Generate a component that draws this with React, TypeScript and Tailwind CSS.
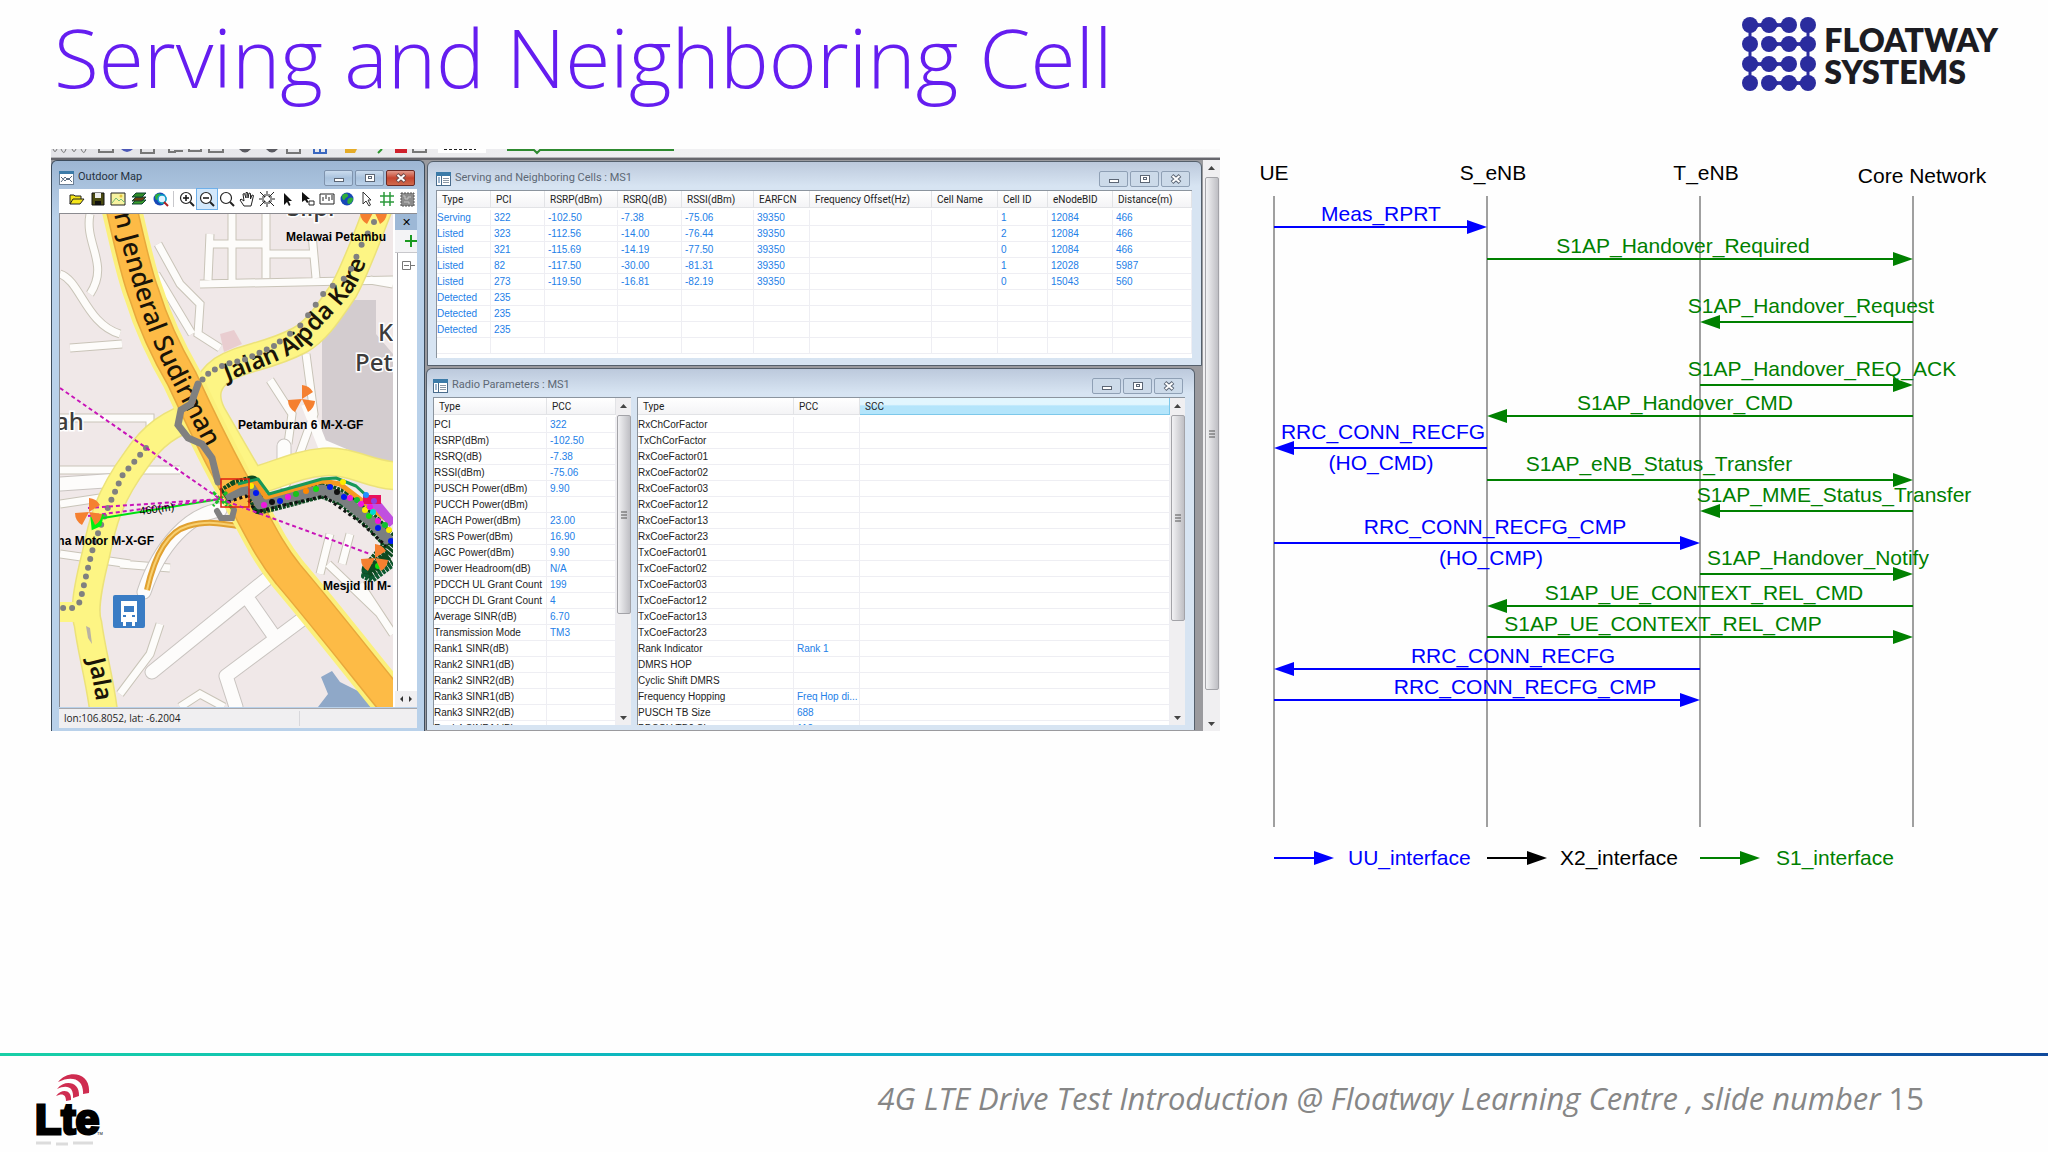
import type { ReactNode } from 'react'

const BLUE = '#0000ff'
const GREEN = '#008000'

const cellColumns = [
  { label: 'Type', width: 'w-[54px]' },
  { label: 'PCI', width: 'w-[54px]' },
  { label: 'RSRP(dBm)', width: 'w-[73px]' },
  { label: 'RSRQ(dB)', width: 'w-[64px]' },
  { label: 'RSSI(dBm)', width: 'w-[72px]' },
  { label: 'EARFCN', width: 'w-[56px]' },
  { label: 'Frequency Offset(Hz)', width: 'w-[122px]' },
  { label: 'Cell Name', width: 'w-[66px]' },
  { label: 'Cell ID', width: 'w-[50px]' },
  { label: 'eNodeBID', width: 'w-[65px]' },
  { label: 'Distance(m)', width: '' },
]

const cellRows = [
  ['Serving', '322', '-102.50', '-7.38', '-75.06', '39350', '', '', '1', '12084', '466'],
  ['Listed', '323', '-112.56', '-14.00', '-76.44', '39350', '', '', '2', '12084', '466'],
  ['Listed', '321', '-115.69', '-14.19', '-77.50', '39350', '', '', '0', '12084', '466'],
  ['Listed', '82', '-117.50', '-30.00', '-81.31', '39350', '', '', '1', '12028', '5987'],
  ['Listed', '273', '-119.50', '-16.81', '-82.19', '39350', '', '', '0', '15043', '560'],
  ['Detected', '235', '', '', '', '', '', '', '', '', ''],
  ['Detected', '235', '', '', '', '', '', '', '', '', ''],
  ['Detected', '235', '', '', '', '', '', '', '', '', ''],
  ['', '', '', '', '', '', '', '', '', '', ''],
]

const radioRows = [
  ['PCI', '322'],
  ['RSRP(dBm)', '-102.50'],
  ['RSRQ(dB)', '-7.38'],
  ['RSSI(dBm)', '-75.06'],
  ['PUSCH Power(dBm)', '9.90'],
  ['PUCCH Power(dBm)', ''],
  ['RACH Power(dBm)', '23.00'],
  ['SRS Power(dBm)', '16.90'],
  ['AGC Power(dBm)', '9.90'],
  ['Power Headroom(dB)', 'N/A'],
  ['PDCCH UL Grant Count', '199'],
  ['PDCCH DL Grant Count', '4'],
  ['Average SINR(dB)', '6.70'],
  ['Transmission Mode', 'TM3'],
  ['Rank1 SINR(dB)', ''],
  ['Rank2 SINR1(dB)', ''],
  ['Rank2 SINR2(dB)', ''],
  ['Rank3 SINR1(dB)', ''],
  ['Rank3 SINR2(dB)', ''],
  ['Rank4 SINR1(dB)', ''],
]

const factorRows = [
  ['RxChCorFactor', '', ''],
  ['TxChCorFactor', '', ''],
  ['RxCoeFactor01', '', ''],
  ['RxCoeFactor02', '', ''],
  ['RxCoeFactor03', '', ''],
  ['RxCoeFactor12', '', ''],
  ['RxCoeFactor13', '', ''],
  ['RxCoeFactor23', '', ''],
  ['TxCoeFactor01', '', ''],
  ['TxCoeFactor02', '', ''],
  ['TxCoeFactor03', '', ''],
  ['TxCoeFactor12', '', ''],
  ['TxCoeFactor13', '', ''],
  ['TxCoeFactor23', '', ''],
  ['Rank Indicator', 'Rank 1', ''],
  ['DMRS HOP', '', ''],
  ['Cyclic Shift DMRS', '', ''],
  ['Frequency Hopping', 'Freq Hop di...', ''],
  ['PUSCH TB Size', '688', ''],
  ['PDSCH TB0 Size', '112', ''],
]

// lifelines: UE 1, S_eNB 214, T_eNB 427, core network 640
const messages = [
  { from: 1, to: 214, y: 79, color: BLUE, text: 'Meas_RPRT', x: 108 },
  { from: 214, to: 640, y: 111, color: GREEN, text: 'S1AP_Handover_Required', x: 410 },
  { from: 640, to: 427, y: 174, color: GREEN, text: 'S1AP_Handover_Request', x: 538, lift: 9 },
  { from: 427, to: 640, y: 237, color: GREEN, text: 'S1AP_Handover_REQ_ACK', x: 549, lift: 9 },
  { from: 640, to: 214, y: 268, color: GREEN, text: 'S1AP_Handover_CMD', x: 412 },
  { from: 214, to: 1, y: 300, color: BLUE, text: 'RRC_CONN_RECFG', x: 110, lift: 9 },
  { from: 214, to: 640, y: 332, color: GREEN, text: 'S1AP_eNB_Status_Transfer', x: 386, lift: 9 },
  { from: 640, to: 427, y: 363, color: GREEN, text: 'S1AP_MME_Status_Transfer', x: 561, lift: 9 },
  { from: 1, to: 427, y: 395, color: BLUE, text: 'RRC_CONN_RECFG_CMP', x: 222, lift: 9 },
  { from: 427, to: 640, y: 426, color: GREEN, text: 'S1AP_Handover_Notify', x: 545, lift: 9 },
  { from: 640, to: 214, y: 458, color: GREEN, text: 'S1AP_UE_CONTEXT_REL_CMD', x: 431 },
  { from: 214, to: 640, y: 489, color: GREEN, text: 'S1AP_UE_CONTEXT_REL_CMP', x: 390 },
  { from: 427, to: 1, y: 521, color: BLUE, text: 'RRC_CONN_RECFG', x: 240 },
  { from: 1, to: 427, y: 552, color: BLUE, text: 'RRC_CONN_RECFG_CMP', x: 252 },
]

function Arrow({ from, to, y, color }: { from: number; to: number; y: number; color: string }) {
  const d = to > from ? -1 : 1
  return (
    <g stroke="none" fill={color}>
      <line x1={from} x2={to + d * 18} y1={y} y2={y} stroke={color} strokeWidth="2" />
      <polygon points={`${to},${y} ${to + d * 20},${y - 7} ${to + d * 20},${y + 7}`} />
    </g>
  )
}

function SequenceDiagram() {
  return (
    <svg viewBox="-1 1 776 740" className="w-full overflow-visible" fontFamily="'Liberation Sans', Arial, sans-serif" fontSize="21">
      <g stroke="#a0a0a0" strokeWidth="2">
        {[1, 214, 427, 640].map((x) => (
          <line key={x} x1={x} x2={x} y1="48" y2="679" />
        ))}
      </g>
      <g textAnchor="middle">
        <text x="1" y="32">UE</text>
        <text x="220" y="32">S_eNB</text>
        <text x="433" y="32">T_eNB</text>
        <text x="649" y="35">Core Network</text>
        {messages.map((m) => (
          <g key={m.y}>
            <Arrow from={m.from} to={m.to} y={m.y} color={m.color} />
            <text x={m.x} y={m.y - (m.lift ?? 6)} fill={m.color}>{m.text}</text>
          </g>
        ))}
        <text x="108" y="322" fill={BLUE}>(HO_CMD)</text>
        <text x="218" y="417" fill={BLUE}>(HO_CMP)</text>
      </g>
      <Arrow from={1} to={61} y={710} color={BLUE} />
      <text x="75" y="717" fill={BLUE}>UU_interface</text>
      <Arrow from={214} to={274} y={710} color="#000000" />
      <text x="287" y="717">X2_interface</text>
      <Arrow from={427} to={487} y={710} color={GREEN} />
      <text x="503" y="717" fill={GREEN}>S1_interface</text>
    </svg>
  )
}

function FloatwayLogo() {
  const at = [8, 27, 47, 66]
  return (
    <div className="flex items-center gap-2">
      <svg viewBox="0 0 74 74" className="h-[74px] w-[74px]" fill="#2b2c9e">
        {at.map((x) => at.map((y) => <circle key={`${x}-${y}`} cx={x} cy={y} r="8" />))}
        <path
          stroke="#2b2c9e"
          strokeWidth="3"
          fill="none"
          d="M8 8H47M8 8V66M66 8V66M27 27H66M8 47H47M27 66H66"
        />
        <path d="M13 3q4.500 7 9 0v10q-4.500-7-9 0zM32 3q5 7 10 0v10q-5-7-10 0zM32 22q5 7 10 0v10q-5-7-10 0zM52 22q4.500 7 9 0v10q-4.500-7-9 0zM13 42q4.500 7 9 0v10q-4.500-7-9 0zM32 42q5 7 10 0v10q-5-7-10 0zM32 61q5 7 10 0v10q-5-7-10 0zM52 61q4.500 7 9 0v10q-4.500-7-9 0z" />
      </svg>
      <div className="pt-1 font-['Lato',sans-serif] text-[32px] leading-8 font-extrabold text-[#1c1c22]">
        FLOATWAY
        <br />
        SYSTEMS
      </div>
    </div>
  )
}

function LteLogo() {
  return (
    <svg viewBox="0 0 72 76" className="h-[76px] w-[72px]">
      <g fill="#cf2c50">
        <path d="M22 9C32-4 55-1 53 20L47 21C48 6 36 2 22 9z" />
        <path d="M21 16C29 6 44 9 43 23L37 25C38 14 31 11 21 16z" />
        <path d="M20 23C26 15 36 17 35 27L30 28C30 21 26 20 20 23z" />
      </g>
      <text
        x="-1"
        y="61"
        fontFamily="'Liberation Sans', Arial, sans-serif"
        fontWeight="700"
        fontSize="43"
        stroke="#000"
        strokeWidth="3"
      >
        Lte
      </text>
      <text x="61" y="62" fontSize="4" fontFamily="'Liberation Sans', Arial, sans-serif">TM</text>
      <path d="M0 70h15M20 71h12M37 70h20" stroke="#dcdcdc" strokeWidth="3" />
    </svg>
  )
}

function WindowButton({ kind, active }: { kind: 'min' | 'max' | 'close'; active?: boolean }) {
  const look = active
    ? kind === 'close'
      ? 'border-[#6b2a25] bg-linear-to-b from-[#e19b8d] via-[#c5442f] to-[#cf6a4d]'
      : 'border-[#7f93ad] bg-linear-to-b from-[#cbdcee] via-[#a9c2dd] to-[#bcd2ea]'
    : 'border-[#8fa0b5] bg-[#ccdae9]'
  const stroke = active && kind === 'close' ? '#6e4a48' : '#5c6675'
  return (
    <button type="button" aria-label={kind} className={`flex h-4 w-[29px] items-center justify-center rounded-xs border ${look}`}>
      <svg viewBox="0 0 12 10" className="h-[10px] w-3" fill="none" stroke={stroke}>
        {kind === 'min' && <rect x="1.500" y="5.500" width="9" height="3" fill="#fff" />}
        {kind === 'max' && (
          <>
            <rect x="1.500" y="1.500" width="9" height="7" fill="#fff" />
            <rect x="4.500" y="3.500" width="3" height="2" />
          </>
        )}
        {kind === 'close' && (
          <>
            <path d="M2 1.500L10 8.500M10 1.500L2 8.500" strokeWidth="4" />
            <path d="M2.500 2L9.500 8M9.500 2L2.500 8" stroke="#fff" strokeWidth="2" />
          </>
        )}
      </svg>
    </button>
  )
}

function TitleBar({ title, icon, active }: { title: string; icon: ReactNode; active?: boolean }) {
  return (
    <div className="flex h-7 shrink-0 items-center gap-[2px] pt-[5px] pr-[2px]">
      <div className={`flex flex-1 items-center gap-1 font-['Roboto',sans-serif] text-[11px] ${active ? 'text-[#26323f]' : 'text-[#5d6875]'}`}>
        {icon}
        {title}
      </div>
      <WindowButton kind="min" active={active} />
      <WindowButton kind="max" active={active} />
      <WindowButton kind="close" active={active} />
    </div>
  )
}

function ListIcon() {
  return (
    <svg viewBox="0 0 15 14" className="h-[14px] w-[15px]">
      <rect x=".5" y=".5" width="14" height="13" fill="#fff" stroke="#4a6c8c" />
      <rect width="15" height="4" fill="#3c7ba8" />
      <path d="M2 6h2M2 8h2M2 10h2" stroke="#3c6fa0" />
      <path d="M5.500 4v9" stroke="#4a6c8c" />
      <path d="M7 6.500h6M7 8.500h6M7 10.500h6" stroke="#8a97a5" />
    </svg>
  )
}

function ChartIcon() {
  return (
    <svg viewBox="0 0 15 14" className="h-[14px] w-[15px]">
      <rect x=".5" y=".5" width="14" height="13" fill="#fff" stroke="#6b7f95" />
      <rect width="15" height="3" fill="#3c7ba8" />
      <path d="M2 6l4 4 3-3 4 4M2 11l4-5 3 3 4-4" fill="none" stroke="#5a6c80" />
    </svg>
  )
}

function ScrollBar({ thumb, width = 'w-[15px]' }: { thumb: string; width?: string }) {
  return (
    <div className={`flex shrink-0 flex-col items-center bg-[#f0eff1] ${width}`}>
      <svg viewBox="0 0 15 17" className="h-[17px] w-[15px] shrink-0">
        <path d="M4 10l3.500-4 3.500 4z" fill="#444" />
      </svg>
      <div className={`flex w-[14px] items-center justify-center rounded-xs border border-[#a3a3a8] bg-linear-to-r from-[#f2f2f4] to-[#bfbfc4] ${thumb}`}>
        <svg viewBox="0 0 6 8" className="h-2 w-[6px]">
          <path d="M0 1h6M0 4h6M0 7h6" stroke="#555" />
        </svg>
      </div>
      <svg viewBox="0 0 15 17" className="mt-auto h-[17px] w-[15px] shrink-0">
        <path d="M4 8l3.500 4 3.500-4z" fill="#444" />
      </svg>
    </div>
  )
}

type Column = { label: string; width: string; selected?: boolean }

function DataTable({ columns, rows, blueFrom = 0 }: { columns: Column[]; rows: string[][]; blueFrom?: number }) {
  return (
    <table className="w-full table-fixed border-separate border-spacing-0 bg-white text-left text-[10px] leading-[15px] whitespace-nowrap">
      <thead className="font-['Roboto',sans-serif] text-[#222]">
        <tr>
          {columns.map((c) => (
            <th
              key={c.label}
              scope="col"
              className={`h-[17px] border-r border-b p-0 pl-[5px] font-normal ${c.width} ${
                c.selected
                  ? 'border-[#7cc8ea] bg-linear-to-b from-[#e2f6fe] from-40% to-[#b4e5fb] to-50%'
                  : 'border-[#e2e3e6] bg-linear-to-b from-white to-[#f4f4f6]'
              }`}
            >
              {c.label}
            </th>
          ))}
        </tr>
      </thead>
      <tbody>
        <tr aria-hidden="true" className="h-[2px]">
          <td colSpan={columns.length} className="p-0" />
        </tr>
        {rows.map((row, i) => (
          <tr key={i} className="h-4">
            {row.map((value, j) => (
              <td
                key={j}
                className={`h-4 border-r border-b border-[#eeeef3] p-0 ${j > 0 ? 'pl-[3px]' : ''} ${
                  j >= blueFrom ? 'text-[#2380e8]' : 'text-[#222]'
                }`}
              >
                {value}
              </td>
            ))}
          </tr>
        ))}
      </tbody>
    </table>
  )
}

const globe = (
  <>
    <circle cx="9" cy="9" r="6.500" fill="#1848b8" />
    <path d="M4 6c2-3 5-3 6-1s-2 2-3 4-3 1-3-3zM10 9c2-2 5-2 5 0s-2 5-4 5-2-3-1-5z" fill="#2fae3a" />
  </>
)
const lens = (
  <>
    <circle cx="8" cy="8" r="5.500" fill="#fff" stroke="#222" strokeWidth="1.200" />
    <path d="M12 12l4 4" stroke="#222" strokeWidth="2" />
  </>
)

const fileTools: [string, ReactNode][] = [
  ['Open', <path d="M2 14V5h4l1 1h6v3M2 14l3-5h11l-4 5z" fill="#f5e51b" stroke="#222" />],
  ['Save', <><path d="M3 3h12v12H3z" fill="#4a4a10" stroke="#111" /><path d="M6 3h6v5H6z" fill="#eee" /><path d="M6 11h6v4H6z" fill="#111" /></>],
  ['Image', <><path d="M2 3h14v12H2z" fill="#f7f3a0" stroke="#222" /><path d="M3 13l4-5 3 3 2-2 4 4" fill="none" stroke="#7b7" /><circle cx="12" cy="6" r="1.500" fill="#e5c33a" /></>],
  ['Layers', <><path d="M2 14l4-4h10l-4 4z" fill="#3a9d2c" stroke="#143" /><path d="M2 11l4-4h10l-4 4z" fill="#6b3e12" stroke="#143" /><path d="M2 7l4-4h10l-4 4z" fill="#2e8c28" stroke="#143" /></>],
  ['Find', <>{globe}<circle cx="11" cy="9" r="4" fill="#dff3ff" stroke="#08a0c8" strokeWidth="1.500" /><path d="M13 12l4 4" stroke="#b02020" strokeWidth="2" /></>],
]

const mapTools: [string, ReactNode][] = [
  ['Zoom in', <>{lens}<path d="M5 8h6M8 5v6" stroke="#111" strokeWidth="1.500" /></>],
  ['Zoom out', <>{lens}<path d="M5 8h6" stroke="#111" strokeWidth="1.500" /></>],
  ['Zoom area', lens],
  ['Pan', <path d="M6 16L2 10l1-1 3 2-1-7 1.500-.5L8 8V2.500h1.500L10 8l1-5 1.500.5L12.500 9 14 5l1.500.5L14 12l-1 4z" fill="#fff" stroke="#222" />],
  ['Fit', <path d="M2 2l5 5M16 2l-5 5M2 16l5-5M16 16l-5-5M4 7h3V4M14 7h-3V4M4 11h3v3M14 11h-3v3M1 9h5M12 9h5M9 1v5M9 12v5" fill="none" stroke="#222" />],
  ['Select', <path d="M6 3v12l3-3 2 4 1.500-1-2-4H14z" fill="#111" />],
  ['Select area', <><path d="M4 2v10l3-2 2 3 1.500-1L9 9h3z" fill="#111" /><path d="M11 11h5v4h-5z" fill="#fff" stroke="#222" /></>],
  ['Ruler', <><path d="M2 4h14v10H2z" fill="#fff" stroke="#222" /><path d="M5 7v4M8 5v4M11 7v4M14 5v5" stroke="#222" /></>],
  ['Earth', globe],
  ['Pointer', <path d="M5 2v12l3-3 3 5 1.500-1-2.500-5H13z" fill="#fff" stroke="#333" />],
  ['Grid', <path d="M2 6h14M2 12h14M6 2v14M12 2v14" stroke="#2c9a3c" strokeWidth="1.500" />],
  ['Texture', <><path d="M3 3h13v13H3z" fill="#8b8b8b" stroke="#555" strokeDasharray="2 1" /><path d="M5 6h2v3h3v-2h3M6 12h5v2" stroke="#c4c4c4" fill="none" /></>],
]

function Tool({ name, on, children }: { name: string; on?: boolean; children: ReactNode }) {
  return (
    <button
      type="button"
      aria-label={name}
      className={`flex h-5 items-center justify-center ${on ? 'bg-[#d3e8fb] outline outline-[#6fb0ea]' : ''}`}
    >
      <svg viewBox="0 0 18 18" className="h-[18px] w-[18px]" fill="none">
        {children}
      </svg>
    </button>
  )
}

function Sector({ x, y }: { x: number; y: number }) {
  return (
    <path
      d={`M${x} ${y}l0-14a14 14 0 0 1 11 7zM${x} ${y}l13 2a14 14 0 0 1-7 11zM${x} ${y}l-7 13a14 14 0 0 1-7-12z`}
      fill="#f58030"
    />
  )
}

const routeDots: [number, number, string][] = [
  [191, 272, '#ffee00'], [196, 279, '#0018f0'], [204, 291, '#f016e0'], [212, 288, '#111'], [220, 287, '#0018f0'],
  [228, 283, '#f016e0'], [236, 280, '#19c319'], [246, 277, '#ff8800'], [256, 275, '#10e010'], [270, 273, '#0018f0'],
  [277, 278, '#111'], [283, 268, '#ffee00'], [284, 283, '#0018f0'], [290, 284, '#f016e0'], [297, 286, '#10c030'],
  [301, 290, '#f016e0'], [305, 296, '#ffee00'], [310, 293, '#f016e0'], [309, 302, '#10e010'], [313, 298, '#00d8d8'],
  [318, 307, '#f016e0'], [318, 314, '#0018f0'], [325, 311, '#10c030'], [329, 316, '#ffee00'], [331, 327, '#0018f0'],
  [306, 281, '#2090ff'], [314, 287, '#9040e0'], [324, 349, '#ffee00'], [318, 352, '#10e010'],
]

function StreetMap() {
  const road = 'M60-12C70 30 76 60 84 80C92 106 104 134 122 165C140 204 158 240 172 266C196 306 204 330 228 360C262 400 290 436 340 498'
  const aipda = 'M320-10C308 20 298 50 284 76C270 96 258 116 240 126C206 144 184 142 162 156C148 166 142 180 152 200L188 262'
  const west = 'M140 200C110 208 92 222 76 246C48 284 42 310 36 340C26 380 24 398 28 410C32 440 40 466 44 500'
  const east = 'M184 270C216 262 236 250 264 248C292 246 312 262 340 262'
  const small =
    'M30 0C24 30 50 50 30 80M0 60C20 66 26 110 60 120M62 130L10 134M98 30L120 70L140 90L138 120L160 134M96 60L132 120M140 70L333 66M150 20L148 66M172 0V66M206 0V64M252 20L256 64M148 30H205M206 40H252M0 204H90V246M0 256H120M210 166L232 200L228 230M246 140L254 200L236 250M0 290L40 284M0 340L70 350M60 350L110 354M310 66L333 70M270 320L260 360M290 320L282 350M268 350L320 400M300 370L333 420M60 480L90 440L100 410M120 493L140 480L164 493'
  const wide =
    'M92 458L208 364M186 382L214 422M166 462L252 398M166 462L176 493M84 378C100 330 130 300 160 296M224 232V268M0 270L60 266'
  return (
    <svg viewBox="0 0 333 493" className="h-[493px] min-w-0 flex-1 bg-[#f0e8e8]" preserveAspectRatio="xMinYMin slice">
      <defs>
        <path id="road-main" d="M54 0C62 34 70 60 76 80C86 112 98 142 114 172C132 208 146 234 176 290" />
        <path id="road-aipda" d="M167 167C200 154 226 146 246 130C264 106 278 98 296 72C306 50 316 24 326-10" />
        <path id="road-south" d="M28 446C32 462 36 478 40 520" />
      </defs>
      <path d="M266 86H316V120L333 140V250L300 246L262 230V110z" fill="#d3cccf" />
      <path d="M160 120l14-4 8 14-18 8z" fill="#e9cdd0" />
      <path d={small} fill="none" stroke="#c9c4b8" strokeWidth="9" />
      <path d={small} fill="none" stroke="#fdfcfa" strokeWidth="7" />
      <path d={wide} fill="none" stroke="#c9c4c0" strokeWidth="15" strokeLinecap="round" />
      <path d={wide} fill="none" stroke="#fdfcfb" strokeWidth="13" strokeLinecap="round" />
      <path d="M246 190L262 230L300 246L333 260" fill="none" stroke="#fdfcfa" strokeWidth="10" />
      <path d="M258 493L268 480L261 463L272 457L280 468L300 478L326 493z" fill="#8fa8c8" />
      <path d="M87 376C94 344 106 318 128 312S160 310 178 312" fill="none" stroke="#e0a030" strokeWidth="6" />
      <path d="M87 376C94 344 106 318 128 312S160 310 178 312" fill="none" stroke="#f8d070" strokeWidth="2" />
      <g fill="none" stroke="#ece27a" strokeWidth="29">
        <path d={aipda} />
        <path d={west} />
        <path d={east} />
      </g>
      <path d="M0 398H30" stroke="#fdf584" strokeWidth="20" />
      <g fill="none" stroke="#fdf584" strokeWidth="26">
        <path d={aipda} />
        <path d={west} />
        <path d={east} />
      </g>
      <path d={road} fill="none" stroke="#fbf07c" strokeWidth="40" />
      <path d={road} fill="none" stroke="#e8a83c" strokeWidth="32" />
      <path d={road} fill="none" stroke="#fdbb46" strokeWidth="29" />

      <g fontFamily="'Noto Sans', sans-serif" fontSize="24" fontWeight="500" fill="#1a1408">
        <text fontSize="26">
          <textPath href="#road-main">n Jenderal Sudirman</textPath>
        </text>
        <text fontWeight="600">
          <textPath href="#road-aipda">Jalan Aipda Kare</textPath>
        </text>
        <text fontWeight="600">
          <textPath href="#road-south">Jala</textPath>
        </text>
        <g fill="#3c3c3c" stroke="#fff" strokeWidth="3" paintOrder="stroke">
          <text x="-5" y="216">ah</text>
          <text x="318" y="127">K</text>
          <text x="295" y="157">Pet</text>
          <text x="227" y="2">Slipi</text>
        </g>
      </g>

      <g fill="none" stroke="#808080" strokeLinecap="round">
        <path d="M314 8L302 30L288 62L266 76L252 96L240 112L214 132" strokeWidth="6" strokeDasharray="0 13" />
        <path d="M214 132L184 146L166 150L150 158L140 168" strokeWidth="6" strokeDasharray="0 8" />
        <path d="M138 170L131 190L121 196L118 211L128 224L142 230L152 244L158 268" strokeWidth="7" />
        <path d="M157 297L161 304H172L174 296" strokeWidth="6" />
        <path d="M86 234L62 262L46 298L34 330L27 358L20 388L12 394L-2 394" strokeWidth="6" strokeDasharray="0 9" />
      </g>

      <g fill="none" strokeLinejoin="round">
        <path d="M164 282L176 274L192 270L200 292L216 288L262 276L284 284L314 310L332 330L310 356L330 344" stroke="#0c4a20" strokeWidth="17" strokeDasharray="3 1" />
        <path d="M166 284L178 277L192 274L200 290L216 286L262 276L282 284L312 308L330 328" stroke="#7b7f80" strokeWidth="11" />
        <path d="M166 278L180 271L196 268L206 283L262 267L280 270L330 308" stroke="#f59a20" strokeWidth="5" />
        <path d="M178 270L198 265L209 280L262 265L276 264L296 272L333 306" stroke="#189858" strokeWidth="3" />
        <path d="M168 288L186 282L196 298L220 292L264 282L300 308L326 332" stroke="#111" strokeWidth="3" strokeDasharray="3 3" />
        <path d="M304 284L318 292L333 310" stroke="#c050e0" strokeWidth="9" />
        <path d="M306 352L304 362L312 366L333 350" stroke="#0c5a30" strokeWidth="6" strokeDasharray="3 1" />
      </g>
      <rect x="303" y="281" width="18" height="9" fill="#e8105c" />
      {routeDots.map(([x, y, color]) => (
        <circle key={`${x}-${y}`} cx={x} cy={y} r="3" fill={color} />
      ))}
      <path d="M153 278l14 14M167 278l-14 14M172 294l-8-8" stroke="#18c028" strokeWidth="3" strokeDasharray="4 2" />
      <rect x="161" y="265" width="28" height="28" fill="none" stroke="#e02010" strokeWidth="1.500" />

      <path d="M43 304L160 285" stroke="#00e010" strokeWidth="2" />
      <path d="M0 174L160 285M28 294L160 285M28 302L160 285L310 340" fill="none" stroke="#c814b8" strokeWidth="2" strokeDasharray="4 3" />
      <path d="M32 304L42 302L40 311L33 314z" fill="#00f010" stroke="#00f010" strokeWidth="3" />
      <text x="80" y="301" fontSize="11" fontFamily="'Liberation Sans', Arial, sans-serif" transform="rotate(-8 80 301)">460(m)</text>

      <Sector x={242} y={185} />
      <Sector x={29} y={298} />
      <Sector x={315} y={344} />
      <Sector x={314} y={-3} />

      <rect x="53" y="381" width="32" height="33" rx="2" fill="#3a7cc4" />
      <path d="M61 387h16v21H61zM63 408h3v4h-3zM72 408h3v4h-3z" fill="#fff" />
      <path d="M64 392h10v6H64zM63 401h3v2h-3zM72 401h3v2h-3z" fill="#3a7cc4" />
      <path d="M26 412l4 2 2 16-4-6z" fill="#b9b2a4" />

      <g fontFamily="'Liberation Sans', Arial, sans-serif" fontSize="12" fontWeight="700">
        <text x="226" y="27">Melawai Petambu</text>
        <text x="178" y="215">Petamburan 6 M-X-GF</text>
        <text x="94" y="331" textAnchor="end">na Motor M-X-GF</text>
        <text x="263" y="376">Mesjid III M-</text>
      </g>
    </svg>
  )
}

function MapWindow() {
  return (
    <section className="flex w-[374px] shrink-0 flex-col rounded-t-md border-x border-t border-[#3d4c5c] bg-linear-to-b from-[#9db6d3] via-[#b9d1ea] via-10% to-[#b9d1ea] px-[7px] pb-[3px]">
      <TitleBar title="Outdoor Map" icon={<ChartIcon />} active />
      <div className="flex h-6 items-start bg-white pl-2">
        <div className="grid w-[103px] grid-cols-5">
          {fileTools.map(([name, art]) => (
            <Tool key={name} name={name}>{art}</Tool>
          ))}
        </div>
        <div className="mx-[3px] mt-[2px] h-4 w-px bg-[#c8c8cc]" />
        <div className="grid flex-1 grid-cols-12">
          {mapTools.map(([name, art]) => (
            <Tool key={name} name={name} on={name === 'Zoom out'}>{art}</Tool>
          ))}
        </div>
      </div>
      <div className="flex border-t border-l border-[#8b8b90] bg-white">
        <StreetMap />
        <div className="flex w-6 flex-col pl-[2px]">
          <button type="button" aria-label="Close panel" className="h-4 bg-[#9db8d6] text-[11px] leading-4 text-black">✕</button>
          <button type="button" aria-label="Add layer" className="flex h-[23px] items-center justify-end border-b border-[#c8c8cc] bg-[#f3f3f5]">
            <svg viewBox="0 0 12 12" className="h-3 w-3">
              <path d="M0 6h12M6 0v12" stroke="#1a9a20" strokeWidth="2" />
            </svg>
          </button>
          <div className="ml-[2px] flex-1 border-l border-[#a0a0a4] pt-2 pl-1">
            <svg viewBox="0 0 14 100" className="h-[100px] w-[14px]" fill="none">
              <path d="M.5 .5h8v8h-8zM2 4.500h5M9 4.500h4" stroke="#777" />
            </svg>
          </div>
          <div className="flex h-4 items-center justify-center bg-[#f0eff1]">
            <svg viewBox="0 0 14 8" className="h-2 w-[14px]">
              <path d="M4 1v6L1 4zM10 1v6l3-3z" fill="#333" />
            </svg>
          </div>
        </div>
      </div>
      <div className="mt-px flex h-5 items-center border-t border-[#a8a8ac] bg-[#f0eff1] pl-[5px] font-['Open_Sans',sans-serif] text-[10px] text-[#222]">
        <span className="w-[236px] border-r border-[#d8d8dc]">lon:106.8052, lat: -6.2004</span>
      </div>
    </section>
  )
}

const frame = 'rounded-t-md border-x border-t border-[#55606c] bg-linear-to-b from-[#bcc9dc] to-[#d7e4f2] to-[24px] pr-[9px]'

function Desktop() {
  return (
    <div className="flex min-w-0 flex-col bg-[#9a9a9e] font-['Liberation_Sans',Arial,sans-serif]">
      <div className="flex h-[9px] overflow-hidden border-b border-[#b4b4b8] bg-linear-to-r from-[#e4e4e8] to-[#fafafa]">
        <svg viewBox="0 0 720 9" className="h-[9px] w-[720px] shrink-0" fill="none">
          <path d="M2 0q2 5 4 0M10 0q3 7 5 0M21 0q2 5 4 0M30 0q3 7 5 0" stroke="#777" />
          <path d="M48 0v3h14v-3M90 0v4h13v-4M118 0v3h6v-1h8M138 0v2h12v-2M158 0v3h14v-3M236 0v4h13v-4M362 0v3h13v-3" stroke="#777" strokeWidth="2" />
          <path d="M70 0q6 6 12 0z" fill="#4c58b8" />
          <path d="M188 0q6 7 12 0zM215 0q6 7 12 0z" fill="#5a5a60" />
          <path d="M263 0v4h12v-4M269 0v3" stroke="#3a68c0" strokeWidth="2" />
          <path d="M294 0h12l-2 4h-10z" fill="#e6ac28" />
          <path d="M327 4l4-4" stroke="#2a962c" strokeWidth="2" />
          <path d="M344 0h12v4h-12z" fill="#d0202c" />
          <path d="M387 0h48v4h-48z" fill="#fff" />
          <path d="M393 0h32" stroke="#222" strokeWidth="2" strokeDasharray="3 2" />
          <path d="M456 1h27l3 3 3-3h134" stroke="#2e8a30" strokeWidth="2" />
        </svg>
      </div>
      <div className="h-[2px] bg-[#66666c]" />
      <div className="flex flex-1">
        <MapWindow />
        <div className="flex min-w-0 flex-1 flex-col gap-[2px] pt-px pl-px">
          <section className={`mr-px ml-px pl-2 ${frame} border-b pb-[7px]`}>
            <TitleBar title="Serving and Neighboring Cells : MS1" icon={<ListIcon />} />
            <div className="border-t border-l border-[#8b949e] bg-white pb-1">
              <DataTable columns={cellColumns} rows={cellRows} />
            </div>
          </section>
          <section className={`mr-2 pl-[6px] ${frame} pb-[5px]`}>
            <TitleBar title="Radio Parameters : MS1" icon={<ListIcon />} />
            <div className="flex h-[328px] gap-[6px] overflow-hidden">
              <div className="flex w-[198px] shrink-0 overflow-hidden border-t border-l border-[#8b949e] bg-white">
                <div className="min-w-0 flex-1">
                  <DataTable columns={[{ label: 'Type', width: 'w-[113px]' }, { label: 'PCC', width: '' }]} rows={radioRows} blueFrom={1} />
                </div>
                <ScrollBar thumb="h-[199px]" />
              </div>
              <div className="flex min-w-0 flex-1 overflow-hidden border-t border-l border-[#8b949e] bg-white">
                <div className="min-w-0 flex-1">
                  <DataTable
                    columns={[
                      { label: 'Type', width: 'w-[156px]' },
                      { label: 'PCC', width: 'w-[66px]' },
                      { label: 'SCC', width: '', selected: true },
                    ]}
                    rows={factorRows}
                    blueFrom={1}
                  />
                </div>
                <ScrollBar thumb="h-[206px]" />
              </div>
            </div>
          </section>
        </div>
        <ScrollBar thumb="h-[513px]" width="w-[17px]" />
      </div>
    </div>
  )
}

export default function App() {
  return (
    <div className="flex min-h-screen flex-col bg-[#fefefe]">
      <header className="flex h-[149px] items-start justify-between pt-[10px] pr-[50px] pl-[54px]">
        <h1 className="font-['Open_Sans',sans-serif] text-[82px] leading-[92px] font-light whitespace-nowrap text-[#651df0]">
          Serving and Neighboring Cell
        </h1>
        <div className="pt-[7px]">
          <FloatwayLogo />
        </div>
      </header>
      <main className="grid grid-cols-[1169fr_52fr_776fr] items-start pl-[51px]">
        <Desktop />
        <div />
        <SequenceDiagram />
      </main>
      <footer className="mt-auto">
        <div className="h-[3px] bg-linear-to-r from-[#18cfa6] via-[#10a8cc] via-50% to-[#104a9c]" />
        <div className="flex h-24 items-start justify-between pr-[124px] pl-9">
          <div className="pt-[17px]">
            <LteLogo />
          </div>
          <p className="pt-[22px] font-['Open_Sans',sans-serif] text-[31px] leading-10 whitespace-nowrap text-[#868686]">
            <em>4G LTE Drive Test Introduction @ Floatway Learning Centre , slide number</em> 15
          </p>
        </div>
      </footer>
    </div>
  )
}
